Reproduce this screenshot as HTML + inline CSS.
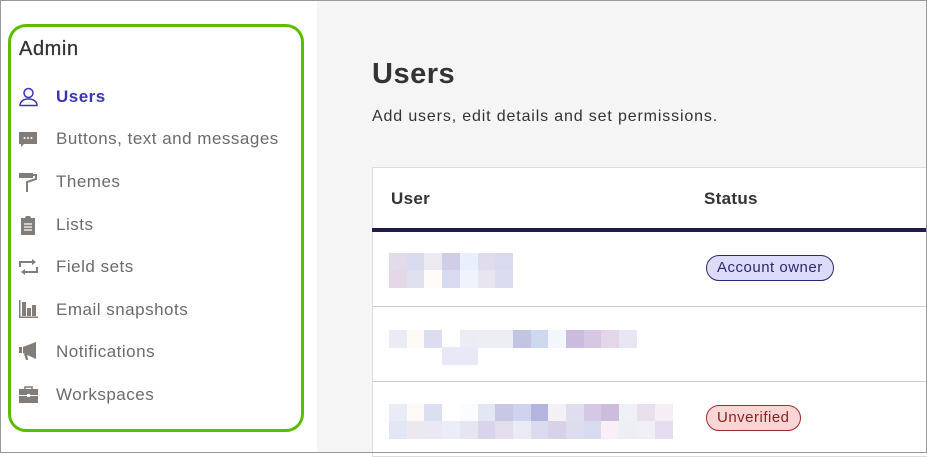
<!DOCTYPE html>
<html><head><style>
*{margin:0;padding:0;box-sizing:border-box}
body{width:927px;height:453px;overflow:hidden;font-family:"Liberation Sans",sans-serif;background:#fff;position:relative}
.frame{position:absolute;left:0;top:0;width:927px;height:453px;border:1px solid #999;pointer-events:none;z-index:5}
.side{position:absolute;left:0;top:0;width:317px;height:453px;background:#fff}
.green{position:absolute;left:8px;top:24px;width:296px;height:408px;border:3px solid #5cbc00;border-radius:18px}
.h{position:absolute;left:19px;top:38px;font-size:20px;color:#333;letter-spacing:.6px;-webkit-text-stroke:.3px #333}
.item{position:absolute;left:56px;font-size:17px;color:#6b6b6b;letter-spacing:.5px}
.ic{position:absolute;left:19px}
.main{position:absolute;left:317px;top:0;width:610px;height:453px;background:#f5f5f5}
h1{position:absolute;left:372px;top:58px;font-size:29px;font-weight:bold;color:#333;letter-spacing:.5px}
.sub{position:absolute;left:372px;top:108px;font-size:16px;color:#333;letter-spacing:.85px}
.tbl{position:absolute;left:372px;top:167px;width:560px;height:290px;background:#fff;border:1px solid #ddd}
.th{position:absolute;top:189px;font-size:17px;font-weight:bold;color:#333;letter-spacing:.3px}
.bar{position:absolute;left:372px;top:228px;width:555px;height:4px;background:#1f1d4e}
.ln{position:absolute;left:372px;width:555px;height:1px;background:#ccc}
.pill{position:absolute;font-size:15px;padding:0 10px;height:26px;line-height:24px;border-radius:13px;border:1px solid;letter-spacing:.5px}
.px{position:absolute;width:18px;height:17.5px}
</style></head><body>
<div class="side"></div>
<div class="main"></div>
<div class="green"></div>
<div class="h">Admin</div>

<svg class="ic" style="top:87px" width="19" height="20" viewBox="0 0 19 20"><circle cx="9.5" cy="6" r="4.5" fill="none" stroke="#3b35b5" stroke-width="1.5"/><path d="M1 18.5c0-4 3.5-6.5 8.5-6.5s8.5 2.5 8.5 6.5z" fill="none" stroke="#3b35b5" stroke-width="1.5"/></svg>
<div class="item" style="top:87px;color:#3b35b5;font-weight:bold">Users</div>

<svg class="ic" style="top:131px" width="18" height="18" viewBox="0 0 18 18"><path d="M0 1h18v12H5l-3 3v-3H0z" fill="#827d79"/><circle cx="5.5" cy="7" r="1" fill="#fff"/><circle cx="9" cy="7" r="1" fill="#fff"/><circle cx="12.5" cy="7" r="1" fill="#fff"/></svg>
<div class="item" style="top:129px">Buttons, text and messages</div>

<svg class="ic" style="top:173px" width="18" height="20" viewBox="0 0 18 20"><rect x="0" y="0" width="14" height="5" fill="#827d79"/><path d="M14 2h3v4l-9 3v10" fill="none" stroke="#827d79" stroke-width="2"/></svg>
<div class="item" style="top:172px">Themes</div>

<svg class="ic" style="top:215px" width="18" height="20" viewBox="0 0 18 20"><path d="M2 3h4l1-2h4l1 2h4v17H2z" fill="#827d79"/><path d="M5 9h8M5 12h8M5 15h8" stroke="#fff" stroke-width="1.3"/></svg>
<div class="item" style="top:215px">Lists</div>

<svg class="ic" style="top:258px" width="19" height="18" viewBox="0 0 19 18"><path d="M1 9V4h14" fill="none" stroke="#827d79" stroke-width="2"/><path d="M13 1l4 3-4 3z" fill="#827d79"/><path d="M18 9v5H4" fill="none" stroke="#827d79" stroke-width="2"/><path d="M6 11l-4 3 4 3z" fill="#827d79"/></svg>
<div class="item" style="top:257px">Field sets</div>

<svg class="ic" style="top:300px" width="19" height="18" viewBox="0 0 19 18"><path d="M0 0v18h19v-1.5H1.5V0z" fill="#827d79"/><rect x="3" y="2" width="4" height="14" fill="#827d79"/><rect x="8" y="8" width="4" height="8" fill="#827d79"/><rect x="13" y="5" width="4" height="11" fill="#827d79"/></svg>
<div class="item" style="top:300px">Email snapshots</div>

<svg class="ic" style="top:342px" width="19" height="19" viewBox="0 0 19 19"><path d="M0 5h3v6H0z" fill="#827d79"/><path d="M4 5l13-5v17L4 11z" fill="#827d79"/><path d="M5 12l2 6h2l-1-6z" fill="#827d79"/></svg>
<div class="item" style="top:342px">Notifications</div>

<svg class="ic" style="top:386px" width="19" height="17" viewBox="0 0 19 17"><path d="M6 3V1h7v2" fill="none" stroke="#827d79" stroke-width="1.6"/><rect x="0" y="3" width="19" height="6" fill="#827d79"/><rect x="0" y="10" width="19" height="7" fill="#827d79"/><rect x="8" y="8" width="3" height="3" fill="#fff"/></svg>
<div class="item" style="top:385px">Workspaces</div>

<h1>Users</h1>
<div class="sub">Add users, edit details and set permissions.</div>
<div class="tbl"></div>
<div class="th" style="left:391px">User</div>
<div class="th" style="left:704px">Status</div>
<div class="bar"></div>
<div class="ln" style="top:306px"></div>
<div class="ln" style="top:381px"></div>

<div class="pill" style="left:706px;top:255px;background:#dcdcfa;border-color:#2a2870;color:#2a2870">Account owner</div>
<div class="pill" style="left:706px;top:405px;background:#f9d6d6;border-color:#a12a2a;color:#8a1f1f">Unverified</div>

<div id="px"></div>
<script>
var rows=[
[253,["e3dbe9","d9dbee","ece9f0","d0cee6","eaf0fb","e0dcec","d9daef"]],
[270,["e4d8e7","dfdff0","fefbf8","d8dbef","eef3fc","e9e4f0","dadcef"]],
[330,["ebebf5","fefaf5","dcdef0","fff","ececf5","eceef3","eceef3","c3c4e4","cdd7ee","f3f6fa","c9bcdc","d6c8e4","e3d6e8","e8e6f3"]],
[347,[null,null,null,"e9e8f6","e9e8f6"]],
[404,["e9ecf7","fef9f6","dcdff0","fff","fbfcfe","e3e6f3","c8c8e4","cfd3ee","b3b4df","f3f1f5","e0ddef","d4c8e5","cdbddd","eef0f5","e8e0ec","f5eef5"]],
[421,["e1e5f4","ebe8f0","ece8f3","ebedf8","e6e6f2","d9d3ec","e4ddee","ebebf5","dbdbef","d8d2e9","dedcef","d8dbef","f8eff7","eeeef5","f0eff5","e4dcef"]]];
var h="";rows.forEach(function(r){r[1].forEach(function(c,i){if(c)h+='<div class="px" style="left:'+(389+i*17.7)+'px;top:'+r[0]+'px;background:#'+c+'"></div>';});});
document.getElementById("px").innerHTML=h;
</script>
<div class="frame"></div>
</body></html>
